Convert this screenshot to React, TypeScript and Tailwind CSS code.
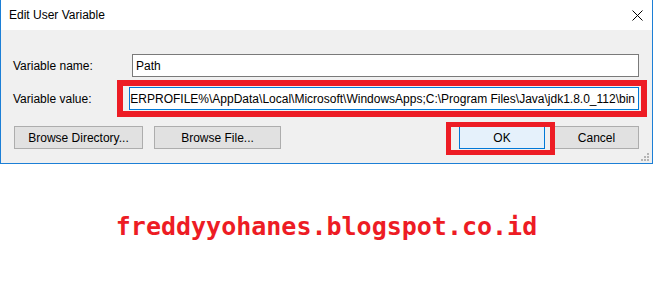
import React from "react";

const font = { fontFamily: '"Liberation Sans", Arial, sans-serif' };

function Btn({ children, primary }: { children: React.ReactNode; primary?: boolean }) {
  return (
    <div
      className={
        "h-[23px] flex items-center justify-center text-[12px] text-black border " +
        (primary ? "bg-[#e5f1fb] border-[#0078d7]" : "bg-[#e1e1e1] border-[#adadad]")
      }
    >
      {children}
    </div>
  );
}

export default function App() {
  return (
    <div className="w-[653px] h-[300px] bg-white overflow-hidden" style={font}>
      <div className="w-[653px] h-[164px] flex flex-col border-l border-r border-b border-[#1c7fd6]">
        <div className="h-[30px] bg-white flex items-center justify-between pl-[8px] pr-[9px]">
          <span className="text-[12px] text-black">Edit User Variable</span>
          <svg width="11" height="11" viewBox="0 0 11 11" className="mt-[1px]">
            <path d="M0.5 0.5 L10.5 10.5 M10.5 0.5 L0.5 10.5" stroke="#000" strokeWidth="1" />
          </svg>
        </div>
        <div className="relative flex-1 bg-[#f0f0f0] flex flex-col pt-[24px] pl-[12px] pr-[13px]">
          <div className="flex items-center">
            <div className="w-[119px] text-[12px] text-black">Variable name:</div>
            <div className="flex-1 h-[23px] bg-white border border-[#7a7a7a] flex items-center pl-[3px] text-[12px] text-black">
              Path
            </div>
          </div>
          <div className="flex items-center mt-[10px]">
            <div className="w-[119px] text-[12px] text-black">Variable value:</div>
            <div className="relative flex-1 h-[23px]">
              <div className="h-full bg-white border border-[#0078d7] flex items-center justify-end overflow-hidden pr-[3px] text-[12px] text-black whitespace-nowrap">
                ERPROFILE%\AppData\Local\Microsoft\WindowsApps;C:\Program Files\Java\jdk1.8.0_112\bin
              </div>
              <div className="absolute left-[-12px] right-[-8px] top-[-7px] bottom-[-7px] border-[6px] border-[#ed1c24]" />
            </div>
          </div>
          <div className="flex items-center mt-[16px]">
            <div className="w-[129px] ml-[1px]">
              <Btn>Browse Directory...</Btn>
            </div>
            <div className="w-[127px] ml-[11px]">
              <Btn>Browse File...</Btn>
            </div>
            <div className="flex-1" />
            <div className="relative w-[86px]">
              <Btn primary>OK</Btn>
              <div className="absolute left-[-13px] right-[-10px] top-[-4px] bottom-[-6px] border-[5px] border-[#ed1c24]" />
            </div>
            <div className="w-[85px] ml-[9px]">
              <Btn>Cancel</Btn>
            </div>
          </div>
          <svg width="9" height="9" viewBox="0 0 9 9" className="absolute right-[2px] bottom-[1px]">
            <g fill="#b4b4b4">
              <rect x="6" y="0" width="2" height="2" />
              <rect x="3" y="3" width="2" height="2" />
              <rect x="6" y="3" width="2" height="2" />
              <rect x="0" y="6" width="2" height="2" />
              <rect x="3" y="6" width="2" height="2" />
              <rect x="6" y="6" width="2" height="2" />
            </g>
          </svg>
        </div>
      </div>
      <div className="flex justify-center pt-[48px]">
        <span
          className="text-[25px] leading-[30px] font-bold text-[#ed1c24]"
          style={{ fontFamily: '"DejaVu Sans Mono", "Liberation Mono", monospace' }}
        >
          freddyyohanes.blogspot.co.id
        </span>
      </div>
    </div>
  );
}
